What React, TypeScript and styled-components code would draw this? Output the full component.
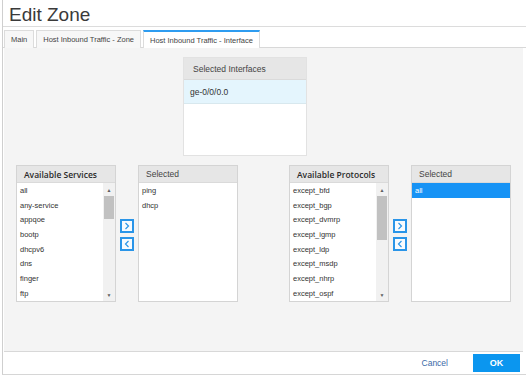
import React from 'react';
import styled, { createGlobalStyle } from 'styled-components';

const GlobalStyle = createGlobalStyle`
  html, body {
    margin: 0;
    padding: 0;
    background: #ffffff;
    font-family: "Liberation Sans", Arial, sans-serif;
  }
`;

const Dialog = styled.div`
  box-sizing: border-box;
  width: 524px;
  height: 375px;
  margin-left: 2px;
  border-left: 1px solid #cfcfcf;
  border-bottom: 1px solid #d6d6d6;
  display: flex;
  flex-direction: column;
  background: #ffffff;
`;

const TitleBar = styled.div`
  height: 27px;
  box-sizing: border-box;
  padding: 4px 0 0 6px;
  border-bottom: 1px solid #dcdcdc;
  font-size: 19px;
  color: #3a3a3a;
  line-height: 22px;
`;

const TabBar = styled.div`
  display: flex;
  gap: 2px;
  padding: 3px 0 0 1px;
  height: 21px;
  box-sizing: border-box;
  border-bottom: 1px solid #d8d8d8;
`;

const Tab = styled.div<{ $active?: boolean }>`
  box-sizing: border-box;
  height: 18px;
  padding: 0 6px;
  display: flex;
  align-items: center;
  font-size: 7.5px;
  color: #444;
  background: ${({ $active }) => ($active ? '#ffffff' : '#f7f7f7')};
  border: 1px solid #dcdcdc;
  border-top: ${({ $active }) => ($active ? '2px solid #2e9cf0' : '1px solid #dcdcdc')};
  border-bottom: none;
`;

const Content = styled.div`
  flex: 1;
  margin: 0 3px 0 1px;
  background: #f4f4f4;
  border-bottom: 1px solid #d8d8d8;
  display: flex;
  flex-direction: column;
`;

const TopRow = styled.div`
  padding: 9px 0 0 179px;
  display: flex;
`;

const InterfacesBox = styled.div`
  width: 124px;
  height: 99px;
  background: #ffffff;
  border: 1px solid #e2e2e2;
  box-sizing: border-box;
`;

const BoxHeader = styled.div<{ $bold?: boolean }>`
  height: 17px;
  box-sizing: border-box;
  background: #e6e6e6;
  border-bottom: 1px solid #dadada;
  padding-left: 7px;
  display: flex;
  align-items: center;
  font-family: ${({ $bold }) => ($bold ? '"Open Sans", "Liberation Sans", sans-serif' : 'inherit')};
  font-size: 8.5px;
  color: ${({ $bold }) => ($bold ? '#2a2a2a' : '#444')};
  font-weight: ${({ $bold }) => ($bold ? 600 : 400)};
`;

const InterfaceHeader = styled(BoxHeader)`
  height: 22px;
  padding-left: 9px;
`;

const InterfaceRow = styled.div`
  height: 23px;
  background: #e4f5fd;
  border-bottom: 1px solid #d8e8ee;
  padding-left: 6px;
  display: flex;
  align-items: center;
  font-size: 8.5px;
  color: #333;
`;

const BottomRow = styled.div`
  padding: 9px 0 0 12px;
  display: flex;
  gap: 51px;
`;

const Group = styled.div`
  display: flex;
  align-items: center;
`;

const ListBox = styled.div`
  width: 100px;
  height: 137px;
  box-sizing: border-box;
  background: #ffffff;
  border: 1px solid #d4d4d4;
  display: flex;
  flex-direction: column;
`;

const ListBody = styled.div`
  flex: 1;
  display: flex;
  overflow: hidden;
`;

const Items = styled.div`
  flex: 1;
`;

const Item = styled.div<{ $selected?: boolean }>`
  height: 14.7px;
  padding-left: 3px;
  display: flex;
  align-items: center;
  font-size: 7.5px;
  color: ${({ $selected }) => ($selected ? '#ffffff' : '#333')};
  background: ${({ $selected }) => ($selected ? '#1793f5' : 'transparent')};
`;

const ScrollTrack = styled.div`
  width: 12px;
  background: #f1f1f1;
  display: flex;
  flex-direction: column;
  align-items: center;
`;

const ScrollArrow = styled.div`
  height: 13px;
  font-size: 5px;
  color: #606060;
  display: flex;
  align-items: center;
  justify-content: center;
`;

const ScrollSpace = styled.div`
  flex: 1;
  width: 100%;
`;

const Thumb = styled.div<{ $h: number }>`
  width: 10px;
  margin: 0 auto;
  height: ${({ $h }) => $h}px;
  background: #c1c1c1;
`;

const Arrows = styled.div`
  width: 22px;
  display: flex;
  flex-direction: column;
  align-items: center;
  gap: 4px;
  padding-top: 2px;
`;

const ArrowButton = styled.div`
  box-sizing: border-box;
  width: 14px;
  height: 14px;
  border: 2px solid #2a95e8;
  background: #f8fbfe;
  display: flex;
  align-items: center;
  justify-content: center;
`;

const Footer = styled.div`
  height: 22px;
  display: flex;
  align-items: center;
  justify-content: flex-end;
  padding-right: 6px;
  gap: 25px;
`;

const Cancel = styled.div`
  font-size: 8.5px;
  color: #3b6aa8;
`;

const OkButton = styled.div`
  width: 47px;
  height: 18px;
  background: #0b96ef;
  color: #fff;
  font-size: 9px;
  font-weight: 700;
  display: flex;
  align-items: center;
  justify-content: center;
`;

const Chevron = ({ dir }: { dir: 'left' | 'right' }) => (
  <svg width="6" height="8" viewBox="0 0 6 8">
    <path
      d={dir === 'right' ? 'M1.5 1 L4.5 4 L1.5 7' : 'M4.5 1 L1.5 4 L4.5 7'}
      fill="none"
      stroke="#2a95e8"
      strokeWidth="1.2"
    />
  </svg>
);

type ListProps = {
  title: string;
  bold?: boolean;
  items: string[];
  selected?: string;
  thumb?: number;
};

const List = ({ title, bold, items, selected, thumb }: ListProps) => (
  <ListBox>
    <BoxHeader $bold={bold}>{title}</BoxHeader>
    <ListBody>
      <Items>
        {items.map((it) => (
          <Item key={it} $selected={it === selected}>
            {it}
          </Item>
        ))}
      </Items>
      {thumb !== undefined && (
        <ScrollTrack>
          <ScrollArrow>▲</ScrollArrow>
          <ScrollSpace>
            <Thumb $h={thumb} />
          </ScrollSpace>
          <ScrollArrow>▼</ScrollArrow>
        </ScrollTrack>
      )}
    </ListBody>
  </ListBox>
);

const MoveButtons = () => (
  <Arrows>
    <ArrowButton>
      <Chevron dir="right" />
    </ArrowButton>
    <ArrowButton>
      <Chevron dir="left" />
    </ArrowButton>
  </Arrows>
);

const services = ['all', 'any-service', 'appqoe', 'bootp', 'dhcpv6', 'dns', 'finger', 'ftp'];
const protocols = [
  'except_bfd',
  'except_bgp',
  'except_dvmrp',
  'except_igmp',
  'except_ldp',
  'except_msdp',
  'except_nhrp',
  'except_ospf',
];

const App = () => (
  <>
    <GlobalStyle />
    <Dialog>
      <TitleBar>Edit Zone</TitleBar>
      <TabBar>
        <Tab>Main</Tab>
        <Tab>Host Inbound Traffic - Zone</Tab>
        <Tab $active>Host Inbound Traffic - Interface</Tab>
      </TabBar>
      <Content>
        <TopRow>
          <InterfacesBox>
            <InterfaceHeader>Selected Interfaces</InterfaceHeader>
            <InterfaceRow>ge-0/0/0.0</InterfaceRow>
          </InterfacesBox>
        </TopRow>
        <BottomRow>
          <Group>
            <List title="Available Services" bold items={services} thumb={23} />
            <MoveButtons />
            <List title="Selected" items={['ping', 'dhcp']} />
          </Group>
          <Group>
            <List title="Available Protocols" bold items={protocols} thumb={44} />
            <MoveButtons />
            <List title="Selected" items={['all']} selected="all" />
          </Group>
        </BottomRow>
      </Content>
      <Footer>
        <Cancel>Cancel</Cancel>
        <OkButton>OK</OkButton>
      </Footer>
    </Dialog>
  </>
);

export default App;
